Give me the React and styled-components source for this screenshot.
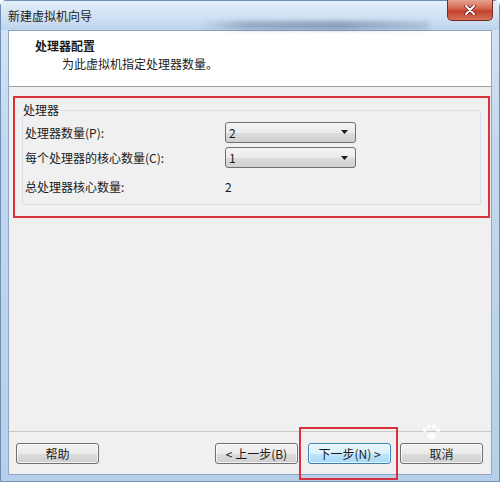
import React from "react";
import styled, { createGlobalStyle } from "styled-components";

const Global = createGlobalStyle`
  html, body { margin: 0; padding: 0; }
  body {
    width: 500px;
    height: 482px;
    overflow: hidden;
    font-family: "Noto Sans CJK SC", "Liberation Sans", sans-serif;
    font-size: 12px;
    color: #1a1a1a;
  }
`;

const Frame = styled.div`
  position: relative;
  width: 500px;
  height: 482px;
  box-sizing: border-box;
  display: flex;
  flex-direction: column;
  background: linear-gradient(180deg, #d6e5f5 0%, #c3d8ee 30%, #b6cfea 100%);
  border: 1px solid #6f8eb3;
  border-radius: 6px 6px 0 0;
`;

const TitleBar = styled.div`
  height: 29px;
  display: flex;
  align-items: center;
  padding-left: 7px;
  position: relative;
  background: linear-gradient(180deg, #e3eef9 0%, #cfe0f3 60%, #bcd3ec 100%);
`;

const Title = styled.span`
  font-size: 12px;
  color: #1b1b1b;
  margin-top: -1px;
`;

const Blur = styled.div`
  position: absolute;
  left: 200px;
  right: 70px;
  top: 20px;
  height: 9px;
  background: linear-gradient(90deg, rgba(90,110,140,0) 0%, rgba(70,90,120,0.35) 20%, rgba(70,90,120,0.45) 60%, rgba(70,90,120,0.15) 100%);
  filter: blur(2px);
`;

const Close = styled.div`
  position: absolute;
  right: 6px;
  top: -1px;
  width: 44px;
  height: 20px;
  border: 1px solid #7a2a20;
  border-top: none;
  border-radius: 0 0 5px 5px;
  background: linear-gradient(180deg, #e8a493 0%, #d3624a 45%, #c2402a 55%, #d5735b 100%);
  display: flex;
  align-items: center;
  justify-content: center;
`;

const Client = styled.div`
  flex: 1;
  margin: 0 7px 6px 7px;
  display: flex;
  flex-direction: column;
  background: #f0f0f0;
  border: 1px solid #8da6c4;
`;

const Header = styled.div`
  height: 56px;
  background: #ffffff;
  border-bottom: 1px solid #a0a0a0;
  padding: 7px 0 0 26px;
  box-sizing: border-box;
`;

const HeadTitle = styled.div`
  font-weight: bold;
  font-size: 12px;
  line-height: 16px;
`;

const HeadSub = styled.div`
  font-size: 12px;
  line-height: 16px;
  margin: 2px 0 0 27px;
`;

const Body = styled.div`
  flex: 1;
  padding: 9px 1px 0 4px;
  border-bottom: 1px solid #c8c8c8;
`;

const Highlight = styled.div`
  border: 2px solid #d9323c;
  height: 122px;
  box-sizing: border-box;
  padding: 5px 7px 0 7px;
`;

const Group = styled.fieldset`
  margin: 0;
  padding: 3px 0 0 2px;
  border: 1px solid #d5dfe5;
  border-radius: 3px;
  height: 102px;
  box-sizing: border-box;
  min-width: 0;
`;

const Legend = styled.legend`
  padding: 0 1px;
  margin-left: -3px;
  font-size: 12px;
  line-height: 14px;
`;

const Row = styled.div`
  display: grid;
  grid-template-columns: 200px 131px;
  align-items: center;
  height: ${p => p.h || 26}px;
`;

const Label = styled.span`
  font-size: 12px;
`;

const Select = styled.div`
  height: 21px;
  box-sizing: border-box;
  border: 1px solid #707070;
  border-radius: 3px;
  background: linear-gradient(180deg, #f4f4f4 0%, #ebebeb 50%, #dddddd 51%, #cfcfcf 100%);
  display: flex;
  align-items: center;
  justify-content: space-between;
  padding: 0 7px 0 3px;
  font-size: 12px;
`;

const Footer = styled.div`
  height: 42px;
  display: flex;
  align-items: center;
  padding: 0 7px 0 7px;
  position: relative;
`;

const Button = styled.div`
  width: 83px;
  height: 21px;
  box-sizing: border-box;
  border: 1px solid ${p => (p.primary ? "#3c7fb1" : "#707070")};
  border-radius: 3px;
  background: ${p =>
    p.primary
      ? "linear-gradient(180deg, #eaf6fd 0%, #d9f0fc 50%, #bee6fd 51%, #a7d9f5 100%)"
      : "linear-gradient(180deg, #f2f2f2 0%, #ebebeb 50%, #dddddd 51%, #cfcfcf 100%)"};
  display: flex;
  align-items: center;
  justify-content: center;
  font-size: 12px;
  margin-left: ${p => p.gap || 0}px;
  box-shadow: inset 0 0 0 1px rgba(255,255,255,0.7);
`;

const Mark = styled.div`
  position: absolute;
  left: 290px;
  top: -5px;
  width: 99px;
  height: 53px;
  border: 2px solid #d9323c;
  box-sizing: border-box;
`;

const Paw = styled.svg`
  position: absolute;
  left: 412px;
  top: -8px;
  pointer-events: none;
`;

const Arrow = () => (
  <svg width="7" height="4" viewBox="0 0 7 4">
    <path d="M0 0 H7 L3.5 4 Z" fill="#1a1a1a" />
  </svg>
);

export default function App() {
  return (
    <>
      <Global />
      <Frame>
        <TitleBar>
          <Title>新建虚拟机向导</Title>
          <Blur />
          <Close>
            <svg width="12" height="10" viewBox="0 0 12 10">
              <path d="M2 1 L10 9 M10 1 L2 9" stroke="#5a1a12" strokeWidth="3.4" strokeLinecap="round" />
              <path d="M2 1 L10 9 M10 1 L2 9" stroke="#ffffff" strokeWidth="2" strokeLinecap="round" />
            </svg>
          </Close>
        </TitleBar>
        <Client>
          <Header>
            <HeadTitle>处理器配置</HeadTitle>
            <HeadSub>为此虚拟机指定处理器数量。</HeadSub>
          </Header>
          <Body>
            <Highlight>
              <Group>
                <Legend>处理器</Legend>
                <Row h={24}>
                  <Label>处理器数量(P):</Label>
                  <Select>2<Arrow /></Select>
                </Row>
                <Row h={27}>
                  <Label>每个处理器的核心数量(C):</Label>
                  <Select>1<Arrow /></Select>
                </Row>
                <Row h={30}>
                  <Label>总处理器核心数量:</Label>
                  <Label>2</Label>
                </Row>
              </Group>
            </Highlight>
          </Body>
          <Footer>
            <Button>帮助</Button>
            <Button gap={116}>&lt; 上一步(B)</Button>
            <Button gap={10} primary>下一步(N) &gt;</Button>
            <Button gap={9}>取消</Button>
            <Mark />
            <Paw width="20" height="18" viewBox="0 0 20 18">
              <g fill="rgba(255,255,255,0.8)">
                <circle cx="4" cy="6" r="2.2" />
                <circle cx="8" cy="2.5" r="2.2" />
                <circle cx="13" cy="2.5" r="2.2" />
                <circle cx="17" cy="6" r="2.2" />
                <ellipse cx="10.5" cy="12" rx="4.5" ry="3.5" />
              </g>
            </Paw>
          </Footer>
        </Client>
      </Frame>
    </>
  );
}
